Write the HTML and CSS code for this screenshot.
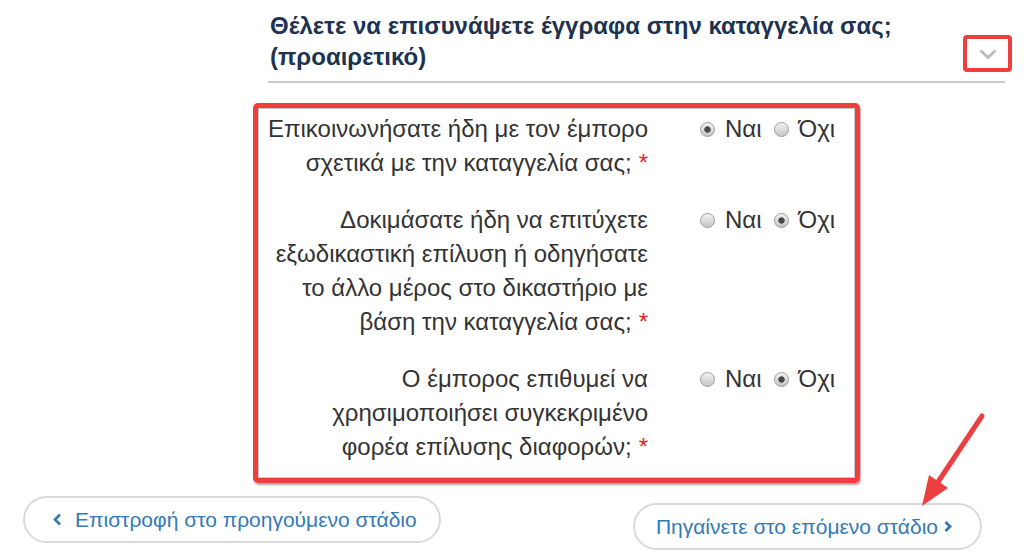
FILE: index.html
```html
<!DOCTYPE html>
<html lang="el">
<head>
<meta charset="utf-8">
<title>Καταγγελία</title>
<link rel="stylesheet" href="styles.css">
</head>
<body>
<div class="page">
  <section class="attach">
    <div class="attach-head">
      <h2 class="attach-title">Θέλετε να επισυνάψετε έγγραφα στην καταγγελία σας; (προαιρετικό)</h2>
      <button class="toggle" type="button" aria-label="Άνοιγμα">
        <svg class="toggle-icon" width="18" height="10" viewBox="0 0 18 10"><path d="M1.5 1.5 L9 8.5 L16.5 1.5" fill="none" stroke="#bdbdbd" stroke-width="3" stroke-linejoin="miter"/></svg>
      </button>
    </div>
  </section>

  <form class="questions">
    <div class="q">
      <p class="q-label required">Επικοινωνήσατε ήδη με τον έμπορο σχετικά με την καταγγελία σας;</p>
      <div class="q-opts">
        <label class="opt"><input class="radio" type="radio" name="q1" checked><span>Ναι</span></label>
        <label class="opt"><input class="radio" type="radio" name="q1"><span>Όχι</span></label>
      </div>
    </div>
    <div class="q">
      <p class="q-label required">Δοκιμάσατε ήδη να επιτύχετε εξωδικαστική επίλυση ή οδηγήσατε το άλλο μέρος στο δικαστήριο με βάση την καταγγελία σας;</p>
      <div class="q-opts">
        <label class="opt"><input class="radio" type="radio" name="q2"><span>Ναι</span></label>
        <label class="opt"><input class="radio" type="radio" name="q2" checked><span>Όχι</span></label>
      </div>
    </div>
    <div class="q">
      <p class="q-label required">Ο έμπορος επιθυμεί να χρησιμοποιήσει συγκεκριμένο φορέα επίλυσης διαφορών;</p>
      <div class="q-opts">
        <label class="opt"><input class="radio" type="radio" name="q3"><span>Ναι</span></label>
        <label class="opt"><input class="radio" type="radio" name="q3" checked><span>Όχι</span></label>
      </div>
    </div>
  </form>

  <div class="nav">
    <button class="btn btn-back" type="button">
      <svg class="chev" width="9" height="13" viewBox="0 0 9 13"><path d="M7 1.5 L2 6.5 L7 11.5" fill="none" stroke="#337ab7" stroke-width="2.6"/></svg>
      <span>Επιστροφή στο προηγούμενο στάδιο</span>
    </button>
    <button class="btn btn-next" type="button">
      <span>Πηγαίνετε στο επόμενο στάδιο</span>
      <svg class="chev" width="8" height="11" viewBox="0 0 8 11"><path d="M1.5 1 L6 5.5 L1.5 10" fill="none" stroke="#337ab7" stroke-width="2.8"/></svg>
    </button>
  </div>

  <svg class="arrow" width="1028" height="558" viewBox="0 0 1028 558" aria-hidden="true">
    <line x1="982" y1="416" x2="938" y2="482" stroke="#ec4040" stroke-width="5" stroke-linecap="round"/>
    <polygon points="922,506 929,475 948,488" fill="#ec4040"/>
  </svg>
</div>
</body>
</html>
```
FILE: styles.css
```css
* { box-sizing: border-box; }

html, body {
  margin: 0;
  padding: 0;
  background: #ffffff;
}

body {
  font-family: "Liberation Sans", Arial, sans-serif;
  color: #333333;
}

.page {
  position: relative;
  width: 1028px;
  height: 558px;
  overflow: hidden;
}

.attach-head {
  display: flex;
  align-items: flex-end;
  margin: 0 23px 0 268px;
  padding: 10px 0 9px 2px;
  border-bottom: 2px solid #cccccc;
}

.attach-title {
  flex: 1;
  margin: 0;
  font-size: 24px;
  line-height: 31px;
  font-weight: bold;
  color: #1d3351;
}

.toggle {
  width: 49px;
  height: 37px;
  margin: 0 -7px 0 0;
  padding: 0;
  border: 4px solid #ef3e3e;
  border-radius: 4px;
  background: #ffffff;
  display: flex;
  align-items: center;
  justify-content: center;
}

.toggle-icon { display: block; }

.questions {
  margin: 20px 0 0 253px;
  width: 607px;
  padding: 4px 0 14px 8px;
  border: 5px solid #ef3e3e;
  border-radius: 5px;
  box-shadow: inset 0 0 0 1px #c8c8c8, 1px 2px 2px rgba(0, 0, 0, 0.35);
}

.q {
  display: grid;
  grid-template-columns: 382px auto;
  column-gap: 52px;
  align-items: start;
}

.q + .q { margin-top: 23px; }

.q-label {
  margin: 0;
  text-align: right;
  font-size: 24px;
  line-height: 34px;
  color: #333333;
}

.required::after {
  content: "*";
  margin-left: 7px;
  color: #e3262c;
}

.q-opts {
  display: flex;
  align-items: center;
  gap: 12px;
}

.opt {
  display: flex;
  align-items: center;
  font-size: 24px;
  line-height: 34px;
  color: #333333;
}

.radio {
  appearance: none;
  -webkit-appearance: none;
  width: 15px;
  height: 15px;
  margin: 0 10px 0 0;
  border: 1px solid #9c9c9c;
  border-radius: 50%;
  background: linear-gradient(#f2f2f2, #c6c6c6);
}

.radio:checked {
  background:
    radial-gradient(circle, #4a4a4a 0, #4a4a4a 2.8px, rgba(74, 74, 74, 0) 3.6px),
    linear-gradient(#f2f2f2, #c6c6c6);
}

.nav {
  display: flex;
  justify-content: space-between;
  align-items: flex-start;
  margin: 13px 46px 0 23px;
}

.btn {
  display: inline-flex;
  align-items: center;
  height: 47px;
  font-family: inherit;
  font-size: 21px;
  color: #337ab7;
  background: #ffffff;
  border: 2px solid #d9d9d9;
  border-radius: 24px;
  cursor: pointer;
}

.btn-back {
  padding: 0 22px 0 28px;
  gap: 13px;
}

.btn-next {
  margin-top: 7px;
  padding: 0 28px 0 21px;
  gap: 6px;
}

.chev { display: block; }

.arrow {
  position: absolute;
  left: 0;
  top: 0;
  pointer-events: none;
}
```
